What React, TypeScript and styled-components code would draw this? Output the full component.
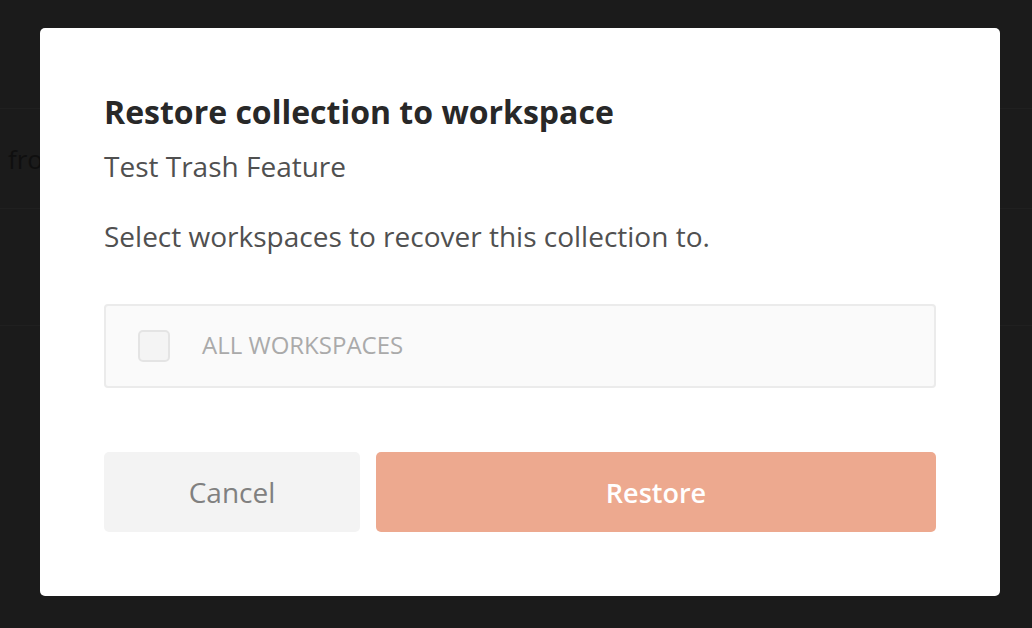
import React from 'react';
import styled, {createGlobalStyle} from 'styled-components';

const GlobalStyle = createGlobalStyle`
    html, body {
        margin: 0;
        padding: 0;
        background: #1b1b1b;
        font-family: "Open Sans", "Noto Sans", sans-serif;
    }
`

const Page = styled.div`
    position: relative;
    width: 1032px;
    height: 628px;
    overflow: hidden;
    background: #1b1b1b;
`

const Backdrop = styled.div`
    display: flex;
    flex-direction: column;
    padding-top: 108px;
`

const BackRow = styled.div<{ $h: number }>`
    height: ${p => p.$h}px;
    border-top: 1px solid #202020;
    box-sizing: border-box;
    display: flex;
    align-items: center;
    padding-left: 8px;
    color: #0f0f0f;
    font-size: 26px;
`

const Overlay = styled.div`
    position: absolute;
    inset: 0;
    display: flex;
    padding: 28px 0 0 40px;
`

const Modal = styled.div`
    width: 960px;
    height: 568px;
    box-sizing: border-box;
    background: #fff;
    border-radius: 5px;
    padding: 64px;
    display: flex;
    flex-direction: column;
`

const Title = styled.h1`
    margin: 0;
    font-size: 32px;
    font-weight: 700;
    color: #282828;
    line-height: 40px;
`

const Subtitle = styled.div`
    margin-top: 16px;
    font-size: 28px;
    color: #505050;
    line-height: 36px;
`

const Text = styled.p`
    margin: 34px 0 0;
    font-size: 28px;
    color: #505050;
    line-height: 36px;
`

const Panel = styled.label`
    margin-top: 50px;
    height: 84px;
    box-sizing: border-box;
    border: 2px solid #ebebeb;
    border-radius: 4px;
    background: #fafafa;
    display: flex;
    align-items: center;
    padding-left: 32px;
    gap: 32px;
`

const Box = styled.span`
    width: 32px;
    height: 32px;
    box-sizing: border-box;
    border: 2px solid #e4e4e4;
    border-radius: 5px;
    background: #f4f4f4;
`

const PanelLabel = styled.span`
    font-size: 24px;
    line-height: 28px;
    margin-top: -3px;
    color: #aaaaaa;
    text-transform: uppercase;
`

const Actions = styled.div`
    margin-top: 64px;
    display: flex;
    gap: 16px;
`

const Button = styled.button<{ $primary?: boolean }>`
    height: 80px;
    border: none;
    border-radius: 5px;
    font-family: inherit;
    font-size: ${p => p.$primary ? 27 : 28}px;
    flex: ${p => p.$primary ? '1' : '0 0 256px'};
    background: ${p => p.$primary ? '#eda98f' : '#f3f3f3'};
    color: ${p => p.$primary ? '#ffffff' : '#808080'};
    font-weight: ${p => p.$primary ? 600 : 400};
`

export default function App() {
    return (
        <Page>
            <GlobalStyle/>
            <Backdrop>
                <BackRow $h={100}>from</BackRow>
                <BackRow $h={117}/>
                <BackRow $h={200}/>
            </Backdrop>
            <Overlay>
                <Modal>
                    <Title>Restore collection to workspace</Title>
                    <Subtitle>Test Trash Feature</Subtitle>
                    <Text>Select workspaces to recover this collection to.</Text>
                    <Panel>
                        <Box/>
                        <PanelLabel>All workspaces</PanelLabel>
                    </Panel>
                    <Actions>
                        <Button>Cancel</Button>
                        <Button $primary disabled>Restore</Button>
                    </Actions>
                </Modal>
            </Overlay>
        </Page>
    );
}
